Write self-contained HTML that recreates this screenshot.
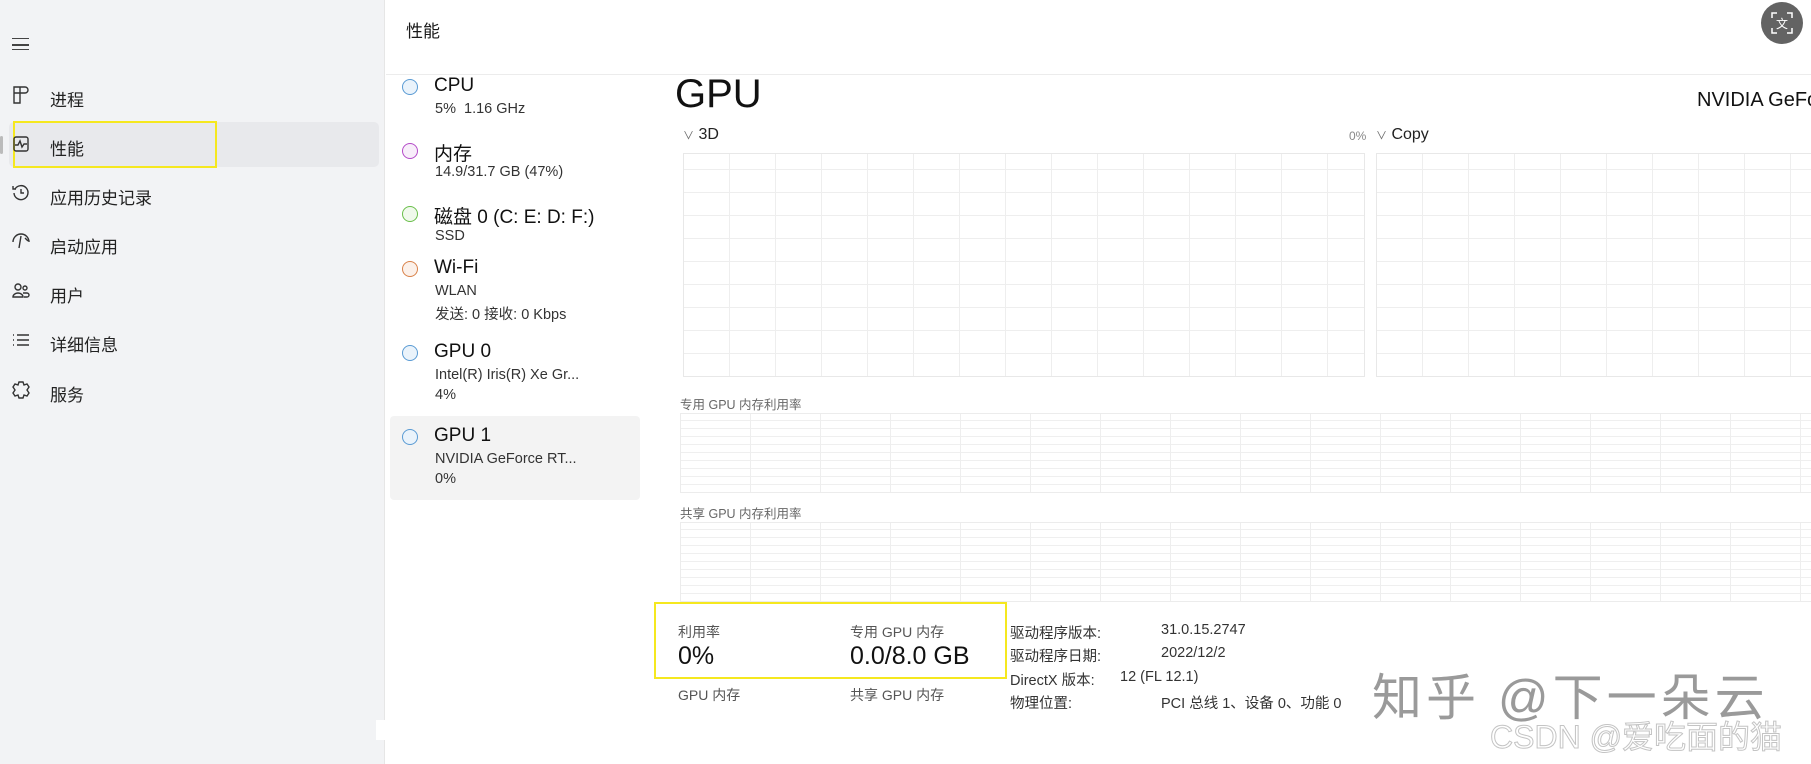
<!DOCTYPE html>
<html><head><meta charset="utf-8"><style>
*{margin:0;padding:0;box-sizing:border-box}
body{width:1811px;height:764px;overflow:hidden;background:#fff;font-family:"Liberation Sans","Noto Sans CJK SC",sans-serif;color:#1a1a1a;position:relative}
.a{position:absolute;white-space:nowrap}
#side{position:absolute;left:0;top:0;width:385px;height:764px;background:#f2f3f5;border-right:1px solid #e6e6e6}
.nav{position:absolute;left:50px;font-size:17px;color:#222}
.ico{position:absolute;left:11px}
.t{font-size:19px;color:#111}
.s{font-size:14.5px;color:#333}
.dot{position:absolute;left:402px;width:16px;height:16px;border-radius:50%;border:1.6px solid}
.grid{position:absolute;border:1px solid #e8e8e8;background-image:repeating-linear-gradient(90deg,transparent 0 45px,#eeeeee 45px 46px),repeating-linear-gradient(0deg,transparent 0 22px,#eeeeee 22px 23px)}
.mgrid{position:absolute;border:1px solid #ececec;background-image:repeating-linear-gradient(90deg,transparent 0 69px,#eeeeee 69px 70px),repeating-linear-gradient(0deg,transparent 0 7px,#efefef 7px 8px)}
.lbl{font-size:14px;color:#555}
.dl{font-size:14.5px;color:#333}
</style></head><body>
<div id="side">
<div class="a" style="left:12px;top:38px;width:17px;height:12px;border-top:1.5px solid #444;border-bottom:1.5px solid #444"></div>
<div class="a" style="left:12px;top:44px;width:17px;height:1.5px;background:#444"></div>
<div class="a" style="left:9px;top:122px;width:370px;height:45px;background:#e8e9ec;border-radius:5px"></div>
<div class="a" style="left:13px;top:121px;width:204px;height:47px;border:2.5px solid #f5e81f"></div>
<div class="a" style="left:0;top:136px;width:3px;height:18px;background:#bbb;border-radius:2px"></div>
<svg class="ico" style="top:85px" width="20" height="20" viewBox="0 0 20 20" fill="none" stroke="#333" stroke-width="1.4"><path d="M3 2h6v16H3zM9 2h5a3 3 0 010 6H9M3 8h6"/></svg>
<div class="nav" style="top:86px">进程</div>
<svg class="ico" style="top:134px" width="20" height="20" viewBox="0 0 20 20" fill="none" stroke="#333" stroke-width="1.4"><rect x="3" y="3" width="14" height="14" rx="2"/><path d="M4 11h3l2-4 2 6 2-3h3"/></svg>
<div class="nav" style="top:135px">性能</div>
<svg class="ico" style="top:183px" width="20" height="20" viewBox="0 0 20 20" fill="none" stroke="#333" stroke-width="1.4"><path d="M4 6a7 7 0 11-1 4M2 3v3h3M10 6v4h3"/></svg>
<div class="nav" style="top:184px">应用历史记录</div>
<svg class="ico" style="top:232px" width="20" height="20" viewBox="0 0 20 20" fill="none" stroke="#333" stroke-width="1.4"><path d="M2 10a8 8 0 0116 0M10 4l-2 12M14 6l3 3"/></svg>
<div class="nav" style="top:233px">启动应用</div>
<svg class="ico" style="top:281px" width="20" height="20" viewBox="0 0 20 20" fill="none" stroke="#333" stroke-width="1.4"><circle cx="7" cy="6" r="3"/><circle cx="14" cy="7" r="2"/><path d="M2 16a5 4 0 0110 0zM12 12h4a2 2 0 010 4h-3"/></svg>
<div class="nav" style="top:282px">用户</div>
<svg class="ico" style="top:330px" width="20" height="20" viewBox="0 0 20 20" fill="none" stroke="#333" stroke-width="1.4"><path d="M2 5h1M2 10h1M2 15h1M6 5h12M6 10h12M6 15h12"/></svg>
<div class="nav" style="top:331px">详细信息</div>
<svg class="ico" style="top:380px" width="20" height="20" viewBox="0 0 20 20" fill="none" stroke="#333" stroke-width="1.4"><path d="M8 2h4l1 3 3-1 2 3-2 3 2 3-2 3-3-1-1 3H8l-1-3-3 1-2-3 2-3-2-3 2-3 3 1z"/></svg>
<div class="nav" style="top:381px">服务</div>
</div>
<div class="a" style="left:376px;top:720px;width:10px;height:20px;background:#fff"></div>

<div class="a" style="left:406px;top:17px;font-size:17px">性能</div>
<div class="a" style="left:386px;top:74px;width:1425px;height:1px;background:#ececec"></div>
<div class="a" style="left:1761px;top:2px;width:42px;height:42px;border-radius:50%;background:#636363"></div>
<svg class="a" style="left:1770px;top:11px" width="24" height="24" viewBox="0 0 24 24" fill="none" stroke="#fff" stroke-width="1.5"><path d="M2 7V2h5M17 2h5v5M22 17v5h-5M7 22H2v-5"/><text x="12" y="17" font-size="12" fill="#fff" stroke="none" text-anchor="middle" font-family="Noto Sans CJK SC">文</text></svg>

<div class="a" style="left:390px;top:416px;width:250px;height:84px;background:#f3f3f3;border-radius:4px"></div>
<div class="dot" style="top:79px;border-color:#5a9bd4;background:#eaf3fb"></div>
<div class="a t" style="left:434px;top:75px">CPU</div><div class="a s" style="left:435px;top:101px">5%&nbsp; 1.16 GHz</div>
<div class="dot" style="top:143px;border-color:#b44bc8;background:#f8eefa"></div>
<div class="a t" style="left:434px;top:139px">内存</div><div class="a s" style="left:435px;top:164px">14.9/31.7 GB (47%)</div>
<div class="dot" style="top:206px;border-color:#6abf4b;background:#f0f9ec"></div>
<div class="a t" style="left:434px;top:202px">磁盘 0 (C: E: D: F:)</div><div class="a s" style="left:435px;top:228px">SSD</div>
<div class="dot" style="top:261px;border-color:#d9824a;background:#fcf1ea"></div>
<div class="a t" style="left:434px;top:257px">Wi-Fi</div><div class="a s" style="left:435px;top:283px">WLAN</div><div class="a s" style="left:435px;top:303px">发送: 0 接收: 0 Kbps</div>
<div class="dot" style="top:345px;border-color:#5a9bd4;background:#eaf3fb"></div>
<div class="a t" style="left:434px;top:341px">GPU 0</div><div class="a s" style="left:435px;top:367px">Intel(R) Iris(R) Xe Gr...</div><div class="a s" style="left:435px;top:387px">4%</div>
<div class="dot" style="top:429px;border-color:#5a9bd4;background:#eaf3fb"></div>
<div class="a t" style="left:434px;top:425px">GPU 1</div><div class="a s" style="left:435px;top:451px">NVIDIA GeForce RT...</div><div class="a s" style="left:435px;top:471px">0%</div>

<div class="a" style="left:675px;top:72px;font-size:40px;color:#111">GPU</div>
<div class="a" style="left:1697px;top:89px;font-size:20px;color:#111">NVIDIA GeFo</div>
<div class="a" style="left:683px;top:126px;font-size:16px;color:#222"><span style="font-size:11px;color:#666">∨</span> 3D</div>
<div class="a" style="left:1349px;top:129px;font-size:12px;color:#888">0%</div>
<div class="a" style="left:1376px;top:126px;font-size:16px;color:#222"><span style="font-size:11px;color:#666">∨</span> Copy</div>
<div class="grid" style="left:683px;top:153px;width:682px;height:224px"></div>
<div class="grid" style="left:1376px;top:153px;width:440px;height:224px"></div>
<div class="a lbl" style="left:680px;top:394px;font-size:12.5px;color:#666">专用 GPU 内存利用率</div>
<div class="mgrid" style="left:680px;top:413px;width:1140px;height:80px"></div>
<div class="a lbl" style="left:680px;top:503px;font-size:12.5px;color:#666">共享 GPU 内存利用率</div>
<div class="mgrid" style="left:680px;top:522px;width:1140px;height:80px"></div>

<div class="a" style="left:654px;top:602px;width:353px;height:77px;border:2.5px solid #f5e81f"></div>
<div class="a lbl" style="left:678px;top:622px">利用率</div>
<div class="a" style="left:678px;top:642px;font-size:25px;color:#111">0%</div>
<div class="a lbl" style="left:850px;top:622px">专用 GPU 内存</div>
<div class="a" style="left:850px;top:642px;font-size:25px;color:#111">0.0/8.0 GB</div>
<div class="a lbl" style="left:678px;top:685px">GPU 内存</div>
<div class="a lbl" style="left:850px;top:685px">共享 GPU 内存</div>

<div class="a dl" style="left:1010px;top:622px">驱动程序版本:</div><div class="a dl" style="left:1161px;top:622px">31.0.15.2747</div>
<div class="a dl" style="left:1010px;top:645px">驱动程序日期:</div><div class="a dl" style="left:1161px;top:645px">2022/12/2</div>
<div class="a dl" style="left:1010px;top:669px">DirectX 版本:</div><div class="a dl" style="left:1120px;top:669px">12 (FL 12.1)</div>
<div class="a dl" style="left:1010px;top:692px">物理位置:</div><div class="a dl" style="left:1161px;top:692px">PCI 总线 1、设备 0、功能 0</div>

<div class="a" style="left:1372px;top:658px;font-size:50px;color:#9a9a9a;letter-spacing:4px">知乎 @下一朵云</div>
<div class="a" style="left:1490px;top:712px;font-size:32px;color:#fff;-webkit-text-stroke:1px #c4c4c4">CSDN @爱吃面的猫</div>
</body></html>
